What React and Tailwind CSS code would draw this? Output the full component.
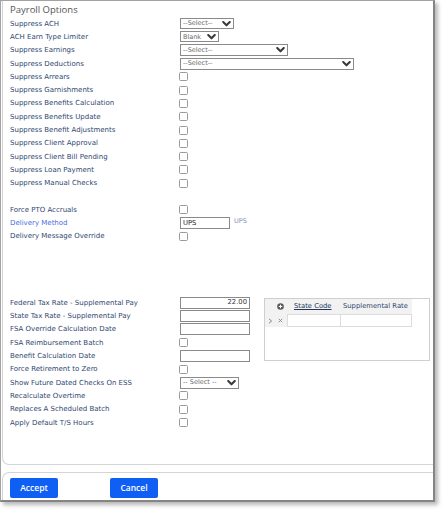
import React from "react";

const F = { fontFamily: '"DejaVu Sans", Verdana, sans-serif' };

function Chevron() {
  return (
    <svg width="9" height="6" viewBox="0 0 10 7" className="shrink-0">
      <path d="M1.2 1.2 L5 5 L8.8 1.2" fill="none" stroke="#3a3a3a" strokeWidth="2.4" strokeLinecap="round" strokeLinejoin="round" />
    </svg>
  );
}

function Select({ w, text, h = "h-[11px]" }) {
  return (
    <div className={`${w} ${h} border border-[#8a8a8a] bg-white flex items-center justify-between pl-[2px] pr-[2px]`}>
      <span className="text-[6.5px] leading-none text-[#6a6a6a]">{text}</span>
      <Chevron />
    </div>
  );
}

function Check() {
  return <div className="w-[9px] h-[9px] border border-[#9a9a9a] rounded-[1.5px] bg-white ml-[-1px]" />;
}

function Input({ w = "w-[70px]", value = "", right = false, color = "text-[#333]" }) {
  return (
    <div className={`${w} h-[12px] border border-[#8a8a8a] bg-white flex items-center px-[2px] ${right ? "justify-end" : ""}`}>
      <span className={`text-[6.8px] leading-none ${color}`}>{value}</span>
    </div>
  );
}

function Row({ label, children, blue }) {
  return (
    <div className="flex items-center h-[13.3px]">
      <div className={`w-[170px] shrink-0 text-[7px] leading-none whitespace-nowrap pt-[1px] ${blue ? "text-[#4a6ee0]" : "text-[#2f4770]"}`}>
        {label}
      </div>
      <div className="flex items-center">{children}</div>
    </div>
  );
}

export default function App() {
  return (
    <div className="bg-white w-[444px] h-[511px]" style={F}>
      <div className="w-[435px] h-[502px] border-l border-t border-[#a2a2a2] border-r-2 border-b-2 border-r-[#858585] border-b-[#858585] shadow-[3px_3px_4px_rgba(0,0,0,0.28)] overflow-hidden flex flex-col bg-white">
        <div className="ml-[1px] h-[464px] w-[440px] border-l border-b border-[#d4d4d4] rounded-bl-[7px] pl-[7px] shrink-0">
          <div className="h-[16px] pt-[3px] text-[9.5px] leading-[12px] text-[#555]" style={{ fontFamily: '"Open Sans", sans-serif' }}>
            Payroll Options
          </div>
          <Row label="Suppress ACH"><Select w="w-[54px]" text="--Select--" /></Row>
          <Row label="ACH Earn Type Limiter"><Select w="w-[39px]" text="Blank" /></Row>
          <Row label="Suppress Earnings"><Select w="w-[108px]" text="--Select--" h="h-[12px]" /></Row>
          <Row label="Suppress Deductions"><Select w="w-[174px]" text="--Select--" h="h-[12px]" /></Row>
          <Row label="Suppress Arrears"><Check /></Row>
          <Row label="Suppress Garnishments"><Check /></Row>
          <Row label="Suppress Benefits Calculation"><Check /></Row>
          <Row label="Suppress Benefits Update"><Check /></Row>
          <Row label="Suppress Benefit Adjustments"><Check /></Row>
          <Row label="Suppress Client Approval"><Check /></Row>
          <Row label="Suppress Client Bill Pending"><Check /></Row>
          <Row label="Suppress Loan Payment"><Check /></Row>
          <Row label="Suppress Manual Checks"><Check /></Row>
          <div className="h-[13.3px]" />
          <Row label="Force PTO Accruals"><Check /></Row>
          <Row label="Delivery Method" blue>
            <Input w="w-[50px]" value="UPS" color="text-[#222]" />
            <span className="ml-[4px] mt-[-3px] text-[6.5px] leading-none text-[#7d8fbb]">UPS</span>
          </Row>
          <Row label="Delivery Message Override"><Check /></Row>
          <div className="h-[53.2px]" />
          <div className="flex">
            <div className="w-[240px] shrink-0">
              <Row label="Federal Tax Rate - Supplemental Pay"><Input value="22.00" right /></Row>
              <Row label="State Tax Rate - Supplemental Pay"><Input /></Row>
              <Row label="FSA Override Calculation Date"><Input /></Row>
              <Row label="FSA Reimbursement Batch"><Check /></Row>
              <Row label="Benefit Calculation Date"><Input /></Row>
              <Row label="Force Retirement to Zero"><Check /></Row>
              <Row label="Show Future Dated Checks On ESS"><Select w="w-[59px]" text="-- Select --" h="h-[12px]" /></Row>
              <Row label="Recalculate Overtime"><Check /></Row>
              <Row label="Replaces A Scheduled Batch"><Check /></Row>
              <Row label="Apply Default T/S Hours"><Check /></Row>
            </div>
            <div className="ml-[14px] mt-[2px] w-[166px] h-[63px] border border-[#cfcfcf] bg-white shrink-0">
              <div className="flex h-[15px] w-[147px] bg-[#f2f2f2]">
                <div className="w-[22px] flex items-center justify-end pr-[3px]">
                  <svg width="7" height="7" viewBox="0 0 8 8">
                    <circle cx="4" cy="4" r="3.8" fill="#5a5a5a" />
                    <path d="M4 2 V6 M2 4 H6" stroke="#fff" strokeWidth="1.2" />
                  </svg>
                </div>
                <div className="w-[54px] flex items-center pl-[7px]">
                  <span className="text-[6.8px] leading-none text-[#23365e] underline underline-offset-[1px]">State Code</span>
                </div>
                <div className="flex-1 flex items-center pl-[2px]">
                  <span className="text-[6.8px] leading-none text-[#2f4770] whitespace-nowrap">Supplemental Rate</span>
                </div>
              </div>
              <div className="flex h-[13px] w-[147px] bg-[#f2f2f2]">
                <div className="w-[22px] flex items-center pl-[3px] text-[#8a8a8a]">
                  <svg width="5" height="6" viewBox="0 0 5 6">
                    <path d="M1 0.8 L3.6 3 L1 5.2" fill="none" stroke="#888" strokeWidth="1" />
                  </svg>
                  <svg width="5" height="5" viewBox="0 0 5 5" className="ml-[5px]">
                    <path d="M0.8 0.8 L4.2 4.2 M4.2 0.8 L0.8 4.2" fill="none" stroke="#888" strokeWidth="0.9" />
                  </svg>
                </div>
                <div className="w-[54px] bg-white border border-[#dcdcdc]" />
                <div className="flex-1 bg-white border border-l-0 border-[#dcdcdc]" />
              </div>
            </div>
          </div>
        </div>
        <div className="ml-[1px] mt-[7px] flex-1 w-[440px] border-l border-t border-[#d4d4d4] rounded-tl-[7px] pl-[7px] pt-[5px] flex" style={{ fontFamily: '"Open Sans", sans-serif' }}>
          <button className="w-[48px] h-[20px] rounded-[2px] bg-[#0f5ff5] text-white text-[8.5px] font-semibold leading-none">Accept</button>
          <button className="ml-[52px] w-[48px] h-[20px] rounded-[2px] bg-[#0f5ff5] text-white text-[8.5px] font-semibold leading-none">Cancel</button>
        </div>
      </div>
    </div>
  );
}
